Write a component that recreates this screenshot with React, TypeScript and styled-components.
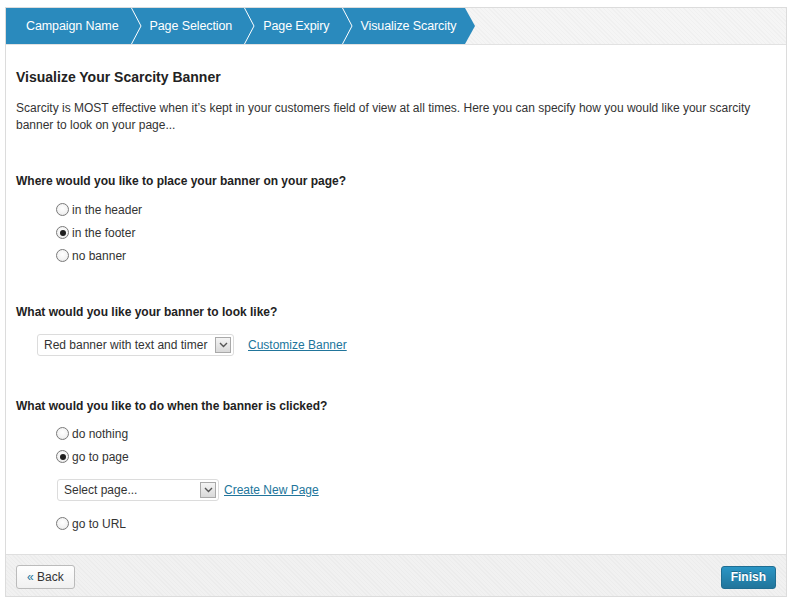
import React from "react";
import styled, { createGlobalStyle } from "styled-components";

const Global = createGlobalStyle`
  html, body { margin: 0; padding: 0; background: #fff; }
  body { font-family: "Liberation Sans", Arial, sans-serif; color: #333; }
`;

const Page = styled.div`
  padding: 7px 0 0 5px;
  width: 792px;
  height: 604px;
  box-sizing: border-box;
`;

const Panel = styled.div`
  width: 782px;
  height: 590px;
  box-sizing: border-box;
  border: 1px solid #dcdcdc;
  display: flex;
  flex-direction: column;
  background: #fff;
`;

const Crumbs = styled.div`
  height: 36px;
  flex: none;
  display: flex;
  align-items: stretch;
  background: repeating-linear-gradient(45deg, #f0f0f0 0 1px, #f5f5f5 1px 3px);
  border-bottom: 1px solid #e2e2e2;
`;

const Step = styled.div<{ $first?: boolean; $last?: boolean }>`
  display: flex;
  align-items: center;
  background: #2a8abd;
  color: #fff;
  font-size: 12.5px;
  letter-spacing: -0.1px;
  padding-left: ${(p) => (p.$first ? 20 : 8)}px;
  padding-right: ${(p) => (p.$last ? 9 : 0)}px;
  white-space: nowrap;
`;

const Sep = styled.svg`
  display: block;
  margin-left: 12px;
  flex: none;
`;

const Tip = styled.svg`
  display: block;
  flex: none;
`;

const Body = styled.div`
  flex: 1;
  padding: 23px 10px 0 10px;
`;

const Title = styled.h2`
  margin: 0;
  font-size: 14px;
  line-height: 18px;
  font-weight: bold;
  color: #222;
`;

const Intro = styled.p`
  margin: 14px 0 0;
  font-size: 12px;
  line-height: 17px;
  color: #333;
  padding-right: 4px;
`;

const Question = styled.h3<{ $gap: number }>`
  margin: ${(p) => p.$gap}px 0 0;
  font-size: 12px;
  line-height: 17px;
  font-weight: bold;
  color: #222;
`;

const Options = styled.div<{ $gap: number }>`
  margin-top: ${(p) => p.$gap}px;
  padding-left: 40px;
  display: flex;
  flex-direction: column;
`;

const RadioRow = styled.label`
  display: flex;
  align-items: center;
  height: 23px;
  font-size: 12px;
  color: #333;
`;

const RadioDot = styled.span<{ $checked?: boolean }>`
  width: 11px;
  height: 11px;
  border-radius: 50%;
  border: 1px solid #7a7a7a;
  background: radial-gradient(circle at 50% 40%, #fff 0%, #f2f2f2 60%, #dadada 100%);
  margin-right: 3px;
  position: relative;
  flex: none;
  &::after {
    content: "";
    display: ${(p) => (p.$checked ? "block" : "none")};
    position: absolute;
    left: 2.5px;
    top: 2.5px;
    width: 6px;
    height: 6px;
    border-radius: 50%;
    background: #1e1e1e;
  }
`;

const SelectRow = styled.div<{ $gap: number; $indent: number; $linkGap: number }>`
  margin-top: ${(p) => p.$gap}px;
  padding-left: ${(p) => p.$indent}px;
  display: flex;
  align-items: center;
  gap: ${(p) => p.$linkGap}px;
  font-size: 12px;
`;

const FakeSelect = styled.div<{ $width: number }>`
  width: ${(p) => p.$width}px;
  height: 22px;
  box-sizing: border-box;
  border: 1px solid #dcdcdc;
  border-radius: 3px;
  background: #fff;
  display: flex;
  align-items: center;
  justify-content: space-between;
  padding: 0 2px 0 6px;
  color: #333;
  font-size: 12px;
`;

const ArrowBox = styled.span`
  width: 16px;
  height: 16px;
  box-sizing: border-box;
  border: 1px solid #a9a9a9;
  background: linear-gradient(#f4f4f4, #d9d9d9);
  display: flex;
  align-items: center;
  justify-content: center;
`;

const Link = styled.a`
  color: #21759b;
  text-decoration: underline;
  font-size: 12px;
  cursor: pointer;
`;

const Footer = styled.div`
  flex: none;
  height: 41px;
  border-top: 1px solid #dfdfdf;
  background: repeating-linear-gradient(45deg, #ececec 0 1px, #f1f1f1 1px 3px);
  display: flex;
  align-items: center;
  justify-content: space-between;
  padding: 0 10px;
`;

const BackButton = styled.button`
  height: 24px;
  padding: 0 10px;
  border: 1px solid #bbb;
  border-radius: 3px;
  background: linear-gradient(#fefefe, #f0f0f0);
  font-family: "Liberation Sans", Arial, sans-serif;
  font-size: 12px;
  color: #333;
  margin-top: 2px;
  span { color: #21759b; }
`;

const FinishButton = styled.button`
  height: 23px;
  padding: 0 9px;
  border: 1px solid #1f6d92;
  border-radius: 3px;
  background: linear-gradient(#2a95c5, #21759b);
  font-family: "Liberation Sans", Arial, sans-serif;
  font-size: 12px;
  font-weight: bold;
  color: #fff;
  text-shadow: 0 -1px 0 rgba(0, 0, 0, 0.3);
  margin-top: 3px;
`;

const Chevron = () => (
  <svg width="9" height="6" viewBox="0 0 9 6">
    <path d="M1 1 L4.5 4.5 L8 1" fill="none" stroke="#555" strokeWidth="1.4" />
  </svg>
);

const Separator = () => (
  <Sep width="11" height="36" viewBox="0 0 11 36">
    <path d="M0.5 0 L10 18 L0.5 36" fill="none" stroke="#fff" strokeWidth="1" />
  </Sep>
);

const Radio = ({ label, checked }: { label: string; checked?: boolean }) => (
  <RadioRow>
    <RadioDot $checked={checked} />
    {label}
  </RadioRow>
);

export default function App() {
  return (
    <>
      <Global />
      <Page>
        <Panel>
          <Crumbs>
            <Step $first>
              Campaign Name
              <Separator />
            </Step>
            <Step>
              Page Selection
              <Separator />
            </Step>
            <Step>
              Page Expiry
              <Separator />
            </Step>
            <Step $last>Visualize Scarcity</Step>
            <Tip width="10" height="36" viewBox="0 0 10 36">
              <path d="M0 0 L10 18 L0 36 Z" fill="#2a8abd" />
            </Tip>
          </Crumbs>
          <Body>
            <Title>Visualize Your Scarcity Banner</Title>
            <Intro>
              Scarcity is MOST effective when it’s kept in your customers field of view at all times. Here you can specify how you would like your scarcity banner to look on your page...
            </Intro>

            <Question $gap={39}>Where would you like to place your banner on your page?</Question>
            <Options $gap={8}>
              <Radio label="in the header" />
              <Radio label="in the footer" checked />
              <Radio label="no banner" />
            </Options>

            <Question $gap={37}>What would you like your banner to look like?</Question>
            <SelectRow $gap={13} $indent={21} $linkGap={14}>
              <FakeSelect $width={197}>
                Red banner with text and timer
                <ArrowBox>
                  <Chevron />
                </ArrowBox>
              </FakeSelect>
              <Link>Customize Banner</Link>
            </SelectRow>

            <Question $gap={42}>What would you like to do when the banner is clicked?</Question>
            <Options $gap={7}>
              <Radio label="do nothing" />
              <Radio label="go to page" checked />
            </Options>
            <SelectRow $gap={11} $indent={41} $linkGap={5}>
              <FakeSelect $width={162}>
                Select page...
                <ArrowBox>
                  <Chevron />
                </ArrowBox>
              </FakeSelect>
              <Link>Create New Page</Link>
            </SelectRow>
            <Options $gap={11}>
              <Radio label="go to URL" />
            </Options>
          </Body>
          <Footer>
            <BackButton>
              <span>«</span> Back
            </BackButton>
            <FinishButton>Finish</FinishButton>
          </Footer>
        </Panel>
      </Page>
    </>
  );
}
